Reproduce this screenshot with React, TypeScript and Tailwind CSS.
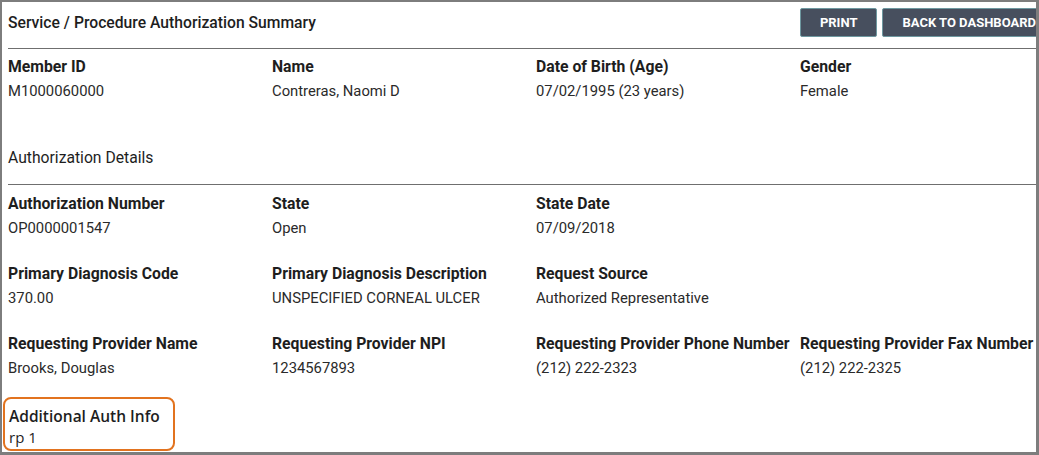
import React from 'react'

type Field = { label: string; value: string }

const member: Field[] = [
  { label: 'Member ID', value: 'M1000060000' },
  { label: 'Name', value: 'Contreras, Naomi D' },
  { label: 'Date of Birth (Age)', value: '07/02/1995 (23 years)' },
  { label: 'Gender', value: 'Female' },
]

const authRows: Field[][] = [
  [
    { label: 'Authorization Number', value: 'OP0000001547' },
    { label: 'State', value: 'Open' },
    { label: 'State Date', value: '07/09/2018' },
  ],
  [
    { label: 'Primary Diagnosis Code', value: '370.00' },
    { label: 'Primary Diagnosis Description', value: 'UNSPECIFIED CORNEAL ULCER' },
    { label: 'Request Source', value: 'Authorized Representative' },
  ],
  [
    { label: 'Requesting Provider Name', value: 'Brooks, Douglas' },
    { label: 'Requesting Provider NPI', value: '1234567893' },
    { label: 'Requesting Provider Phone Number', value: '(212) 222-2323' },
    { label: 'Requesting Provider Fax Number', value: '(212) 222-2325' },
  ],
]

function FieldRow({ fields }: { fields: Field[] }) {
  return (
    <div className="grid grid-cols-[264px_264px_264px_1fr]">
      {fields.map(f => (
        <div key={f.label} className="whitespace-nowrap">
          <div className="text-[15.75px] font-bold leading-6 text-[#1e1e1e]">{f.label}</div>
          <div className="text-[14.8px] leading-6 text-[#2a2a2a]">{f.value}</div>
        </div>
      ))}
    </div>
  )
}

export default function App() {
  return (
    <div
      className="w-[1039px] h-[455px] overflow-hidden bg-white border-t-2 border-l-2 border-r-[3px] border-b-[3px] border-[#7d7d7d]"
      style={{ fontFamily: 'Roboto, "Liberation Sans", sans-serif' }}
    >
      <div className="pl-[6px] h-full overflow-hidden">
        {/* Header */}
        <div className="flex items-center h-[41px] mb-[5px]">
          <h1 className="flex-1 text-[15.7px] font-medium text-[#1e1e1e]">
            Service / Procedure Authorization Summary
          </h1>
          <div className="flex gap-[5px] mr-[-20px] shrink-0">
            <button className="h-[29px] px-[19px] rounded-[2px] border border-[#6e98a0] bg-[#474f5e] text-[13px] font-bold text-white">
              PRINT
            </button>
            <button className="h-[29px] px-[19px] rounded-[2px] border border-[#6e98a0] bg-[#474f5e] text-[13px] font-bold text-white">
              BACK TO DASHBOARD
            </button>
          </div>
        </div>
        <div className="h-px bg-[#6f6f6f]" />

        <div className="pt-[6px]">
          <FieldRow fields={member} />
        </div>

        <div className="mt-[43px] text-[15.7px] leading-6 text-[#1e1e1e]">Authorization Details</div>
        <div className="mt-[14px] h-px bg-[#6f6f6f]" />

        <div className="pt-[7px] flex flex-col gap-[22px]">
          {authRows.map((r, i) => (
            <FieldRow key={i} fields={r} />
          ))}
        </div>

        {/* highlighted annotation */}
        <div className="mt-[17px] ml-[-5px] w-[172px] h-[54px] rounded-[8px] border-2 border-[#e2731f] pl-[4px] pt-[7px]">
          <div
            className="text-[15.5px] font-semibold leading-[20px] text-[#1e1e1e]"
            style={{ fontFamily: '"Open Sans", "Noto Sans", sans-serif' }}
          >
            Additional Auth Info
          </div>
          <div
            className="text-[15px] leading-[22px] text-[#1e1e1e]"
            style={{ fontFamily: '"Open Sans", "Noto Sans", sans-serif' }}
          >
            rp 1
          </div>
        </div>
      </div>
    </div>
  )
}
